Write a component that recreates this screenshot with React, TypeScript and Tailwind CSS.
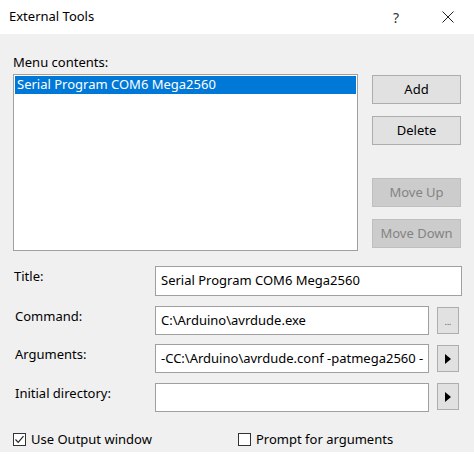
import React from 'react';

const font = { fontFamily: '"Noto Sans", "Open Sans", sans-serif' };

function DlgButton({ label, disabled }: { label: string; disabled?: boolean }) {
  return (
    <button
      className={
        disabled
          ? 'h-[29px] w-[89px] border border-[#bfbfbf] bg-[#cccccc] text-[13px] text-[#838383]'
          : 'h-[29px] w-[89px] border border-[#adadad] bg-[#e1e1e1] text-[13px] text-black'
      }
    >
      {label}
    </button>
  );
}

function SmallButton({ children }: { children: React.ReactNode }) {
  return (
    <button className="flex h-[27px] w-[22px] items-center justify-center border border-[#adadad] bg-[#e1e1e1]">
      {children}
    </button>
  );
}

function Arrow() {
  return (
    <svg width="6" height="10" viewBox="0 0 6 10">
      <path d="M0 0 L6 5 L0 10 Z" fill="#000" />
    </svg>
  );
}

function Field({ label, value, top }: { label: string; value: string; top: string }) {
  return (
    <div className={`flex ${top}`}>
      <div className="w-[142px] pl-[2px] pt-[1px] text-[13px]">{label}</div>
      <div className="flex h-[29px] w-[274px] items-center border border-[#a0a0a0] bg-white px-[5px] text-[13px] whitespace-nowrap overflow-hidden">
        {value}
      </div>
    </div>
  );
}

function CheckBox({ checked, label }: { checked?: boolean; label: string }) {
  return (
    <div className="flex items-center gap-[5px]">
      <div className="flex h-[13px] w-[13px] items-center justify-center border border-[#333333] bg-white">
        {checked && (
          <svg width="11" height="11" viewBox="0 0 11 11">
            <path d="M1.5 5.5 L4.2 8.3 L9.5 2.2" fill="none" stroke="#222" strokeWidth="1.2" />
          </svg>
        )}
      </div>
      <span className="text-[13px]">{label}</span>
    </div>
  );
}

export default function App() {
  return (
    <div className="h-[454px] w-[474px] bg-white text-black" style={font}>
      {/* Title bar */}
      <div className="flex h-[34px] items-center">
        <span className="ml-[9px] text-[13px]">External Tools</span>
        <span className="ml-auto text-[14px] text-[#333]">?</span>
        <svg className="ml-[43px] mr-[20px]" width="12" height="12" viewBox="0 0 12 12">
          <path d="M0.5 0.5 L11.5 11.5 M11.5 0.5 L0.5 11.5" stroke="#222" strokeWidth="1" />
        </svg>
      </div>

      {/* Body */}
      <div className="h-[418px] bg-[#f0f0f0] pl-[13px]">
        <div className="pt-[19px] text-[13px] leading-[18px]">Menu contents:</div>
        <div className="mt-[3px] flex">
          <div className="h-[177px] w-[345px] border border-[#a0a0a0] bg-white p-[1px]">
            <div className="flex h-[18px] items-center bg-[#0078d7] pl-[2px] text-[13px] text-white">
              Serial Program COM6 Mega2560
            </div>
          </div>
          <div className="ml-[14px] flex flex-col pt-[1px]">
            <DlgButton label="Add" />
            <div className="mt-[12px]">
              <DlgButton label="Delete" />
            </div>
            <div className="mt-[33px]">
              <DlgButton label="Move Up" disabled />
            </div>
            <div className="mt-[12px]">
              <DlgButton label="Move Down" disabled />
            </div>
          </div>
        </div>

        {/* Fields */}
        <div className="mt-[15px] flex">
          <div className="w-[142px] pl-[1px] pt-[1px] text-[13px]">Title:</div>
          <div className="flex h-[30px] w-[307px] items-center border border-[#a0a0a0] bg-white px-[5px] text-[13px]">
            Serial Program COM6 Mega2560
          </div>
        </div>
        <div className="flex items-start">
          <Field label="Command:" value="C:\Arduino\avrdude.exe" top="mt-[10px]" />
          <div className="ml-[8px] mt-[11px]">
            <SmallButton>
              <span className="pt-[3px] text-[8px] leading-none text-[#444]">...</span>
            </SmallButton>
          </div>
        </div>
        <div className="flex items-start">
          <Field label="Arguments:" value="-CC:\Arduino\avrdude.conf -patmega2560 -" top="mt-[9px]" />
          <div className="ml-[8px] mt-[10px]">
            <SmallButton>
              <Arrow />
            </SmallButton>
          </div>
        </div>
        <div className="flex items-start">
          <Field label="Initial directory:" value="" top="mt-[10px]" />
          <div className="ml-[8px] mt-[10px]">
            <SmallButton>
              <Arrow />
            </SmallButton>
          </div>
        </div>

        {/* Checkboxes */}
        <div className="mt-[18px] flex">
          <div className="w-[225px]">
            <CheckBox checked label="Use Output window" />
          </div>
          <CheckBox label="Prompt for arguments" />
        </div>
      </div>
    </div>
  );
}
